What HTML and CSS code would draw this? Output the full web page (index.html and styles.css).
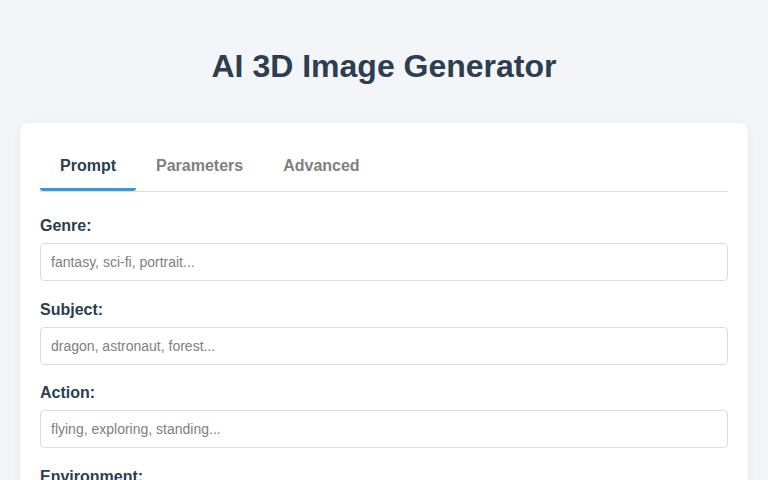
FILE: index.html
```html
<!DOCTYPE html>
<html lang="en">
<head>
<meta charset="utf-8">
<title>AI 3D Image Generator</title>
<link rel="stylesheet" href="styles.css">
</head>
<body>
<div class="page">
  <h1 class="title">AI 3D Image Generator</h1>
  <div class="card">
    <div class="tabs">
      <div class="tab active">Prompt</div>
      <div class="tab">Parameters</div>
      <div class="tab">Advanced</div>
    </div>
    <div class="form">
      <div class="group">
        <label class="label">Genre:</label>
        <input class="input" type="text" placeholder="fantasy, sci-fi, portrait...">
      </div>
      <div class="group">
        <label class="label">Subject:</label>
        <input class="input" type="text" placeholder="dragon, astronaut, forest...">
      </div>
      <div class="group">
        <label class="label">Action:</label>
        <input class="input" type="text" placeholder="flying, exploring, standing...">
      </div>
      <div class="group">
        <label class="label">Environment:</label>
        <input class="input" type="text" placeholder="mountains, space station, city...">
      </div>
    </div>
  </div>
</div>
</body>
</html>
```

FILE: styles.css
```css
* { box-sizing: border-box; }
html, body { margin: 0; padding: 0; }
body {
  background: #f4f5f9;
  font-family: "Liberation Sans", Arial, sans-serif;
  color: #2c3e50;
}
.page {
  padding: 0 20px 20px;
}
.title {
  margin: 0;
  padding: 48px 0 38px;
  text-align: center;
  font-size: 32px;
  line-height: 37px;
  font-weight: bold;
  color: #2c3e50;
}
.card {
  background: #ffffff;
  border-radius: 8px;
  box-shadow: 0 2px 10px rgba(0, 0, 0, 0.06);
  padding: 20px;
}
.tabs {
  display: flex;
  border-bottom: 1px solid #dddddd;
  margin-bottom: 25px;
}
.tab {
  padding: 14px 20px 13px;
  font-size: 16px;
  line-height: 18px;
  font-weight: bold;
  color: #7f7f7f;
  border-bottom: 3px solid transparent;
  border-radius: 2px 2px 3px 3px;
}
.tab.active {
  color: #2c3e50;
  border-bottom-color: #3498db;
}
.group {
  display: flex;
  flex-direction: column;
  margin-bottom: 19.5px;
}
.label {
  font-size: 16px;
  line-height: 18px;
  font-weight: bold;
  color: #2c3e50;
  margin-bottom: 8px;
}
.input {
  height: 38px;
  padding: 0 10px;
  border: 1px solid #dddddd;
  border-radius: 4px;
  font-family: "Liberation Sans", Arial, sans-serif;
  font-size: 14px;
  color: #2c3e50;
  background: #ffffff;
  outline: none;
}
.input::placeholder {
  color: #808080;
}
```
